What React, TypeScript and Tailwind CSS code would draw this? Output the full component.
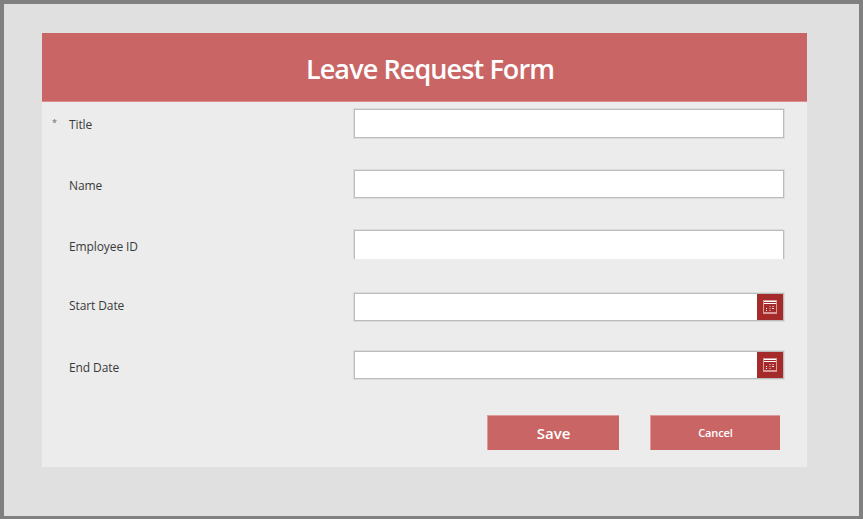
import React from "react";

// Leave request form: grey page, red header, five rows, two buttons

type Row = {
  label: string;
  required?: boolean;
  date?: boolean;
  rowClass: string;
  labelClass: string;
  openBottom?: boolean;
};

const rows: Row[] = [
  { label: "Title", required: true, rowClass: "mt-[7px] h-[30px]", labelClass: "pt-[2px]" },
  { label: "Name", rowClass: "mt-[31px] h-[29px]", labelClass: "pt-[3px]" },
  { label: "Employee ID", rowClass: "mt-[31px] h-[29px]", labelClass: "pt-[5px]", openBottom: true },
  { label: "Start Date", date: true, rowClass: "mt-[34px] h-[29px]", labelClass: "pb-[4px]" },
  { label: "End Date", date: true, rowClass: "mt-[29px] h-[29px]", labelClass: "pt-[5px]" },
];

function CalendarIcon() {
  return (
    <svg width="14" height="14" viewBox="0 0 14 14" fill="none">
      <rect x="0.5" y="0.5" width="13" height="13" stroke="#d99a9a" />
      <rect x="1" y="1" width="12" height="1" fill="#ffffff" />
      <rect x="1" y="3" width="12" height="1" fill="#ffffff" />
      <rect x="1" y="12" width="12" height="1" fill="#d99a9a" />
      <rect x="6" y="6" width="2" height="1" fill="#c97a7a" />
      <rect x="9" y="6" width="2" height="1" fill="#d99a9a" />
      <rect x="3" y="8" width="1" height="1" fill="#ffffff" />
      <rect x="6" y="8" width="2" height="1" fill="#c97a7a" />
      <rect x="9" y="8" width="2" height="1" fill="#f3dede" />
      <rect x="3" y="10" width="1" height="1" fill="#ffffff" />
      <rect x="6" y="10" width="2" height="1" fill="#c97a7a" />
    </svg>
  );
}

function FormRow({ row }: { row: Row }) {
  return (
    <div className={`flex items-center pl-[10px] pr-[22px] ${row.rowClass}`}>
      <div className={`flex w-[302px] shrink-0 items-center text-[12px] tracking-[-0.1px] text-[#3a3a3a] ${row.labelClass}`}>
        <span className="mb-[5px] w-[17px] text-[9px] leading-none text-[#666666]">{row.required ? "*" : ""}</span>
        <span>{row.label}</span>
      </div>
      <div className={`h-full flex-1 pr-px ${row.openBottom ? "" : "pb-px"}`}>
        <div
          className={`flex h-full border border-[#bcbcbc] bg-white ${
            row.openBottom
              ? "border-b-0 shadow-[-1px_-1px_0_0_#dcdcdc,1px_0_0_0_#dcdcdc]"
              : "shadow-[0_0_0_1px_#dcdcdc]"
          }`}
        >
          <input className="h-full min-w-0 flex-1 bg-white outline-none" />
          {row.date && (
            <div className="flex w-[26px] shrink-0 items-center justify-center bg-[#a52a2a]">
              <CalendarIcon />
            </div>
          )}
        </div>
      </div>
    </div>
  );
}

export default function App() {
  return (
    <div
      className="h-[519px] w-[863px] overflow-hidden border-t-[4px] border-r-[4px] border-b-[3px] border-l-[4px] border-[#808080] bg-[#e0e0e0] pt-[29px] pl-[38px]"
      style={{ fontFamily: '"Open Sans", "Noto Sans", sans-serif' }}
    >
      <div className="h-[434px] w-[765px] bg-[#ececec]">
        <div className="flex h-[69px] items-center justify-center border-b border-[#dc8a8a] bg-[#c96565] pt-[4px] pl-[11px]">
          <h1 className="text-[27px] font-semibold tracking-[-0.9px] text-white">Leave Request Form</h1>
        </div>
        {rows.map((row) => (
          <FormRow key={row.label} row={row} />
        ))}
        <div className="mt-[35px] flex pl-[445px]">
          <button className="h-[35px] w-[132px] border-t border-l border-[#dc9a9a] bg-[#c96565] text-[15px] font-semibold text-white">
            Save
          </button>
          <button className="ml-[31px] h-[35px] w-[130px] border-t border-l border-[#dc9a9a] bg-[#c96565] text-[11px] font-semibold tracking-[-0.1px] text-white">
            Cancel
          </button>
        </div>
      </div>
    </div>
  );
}
